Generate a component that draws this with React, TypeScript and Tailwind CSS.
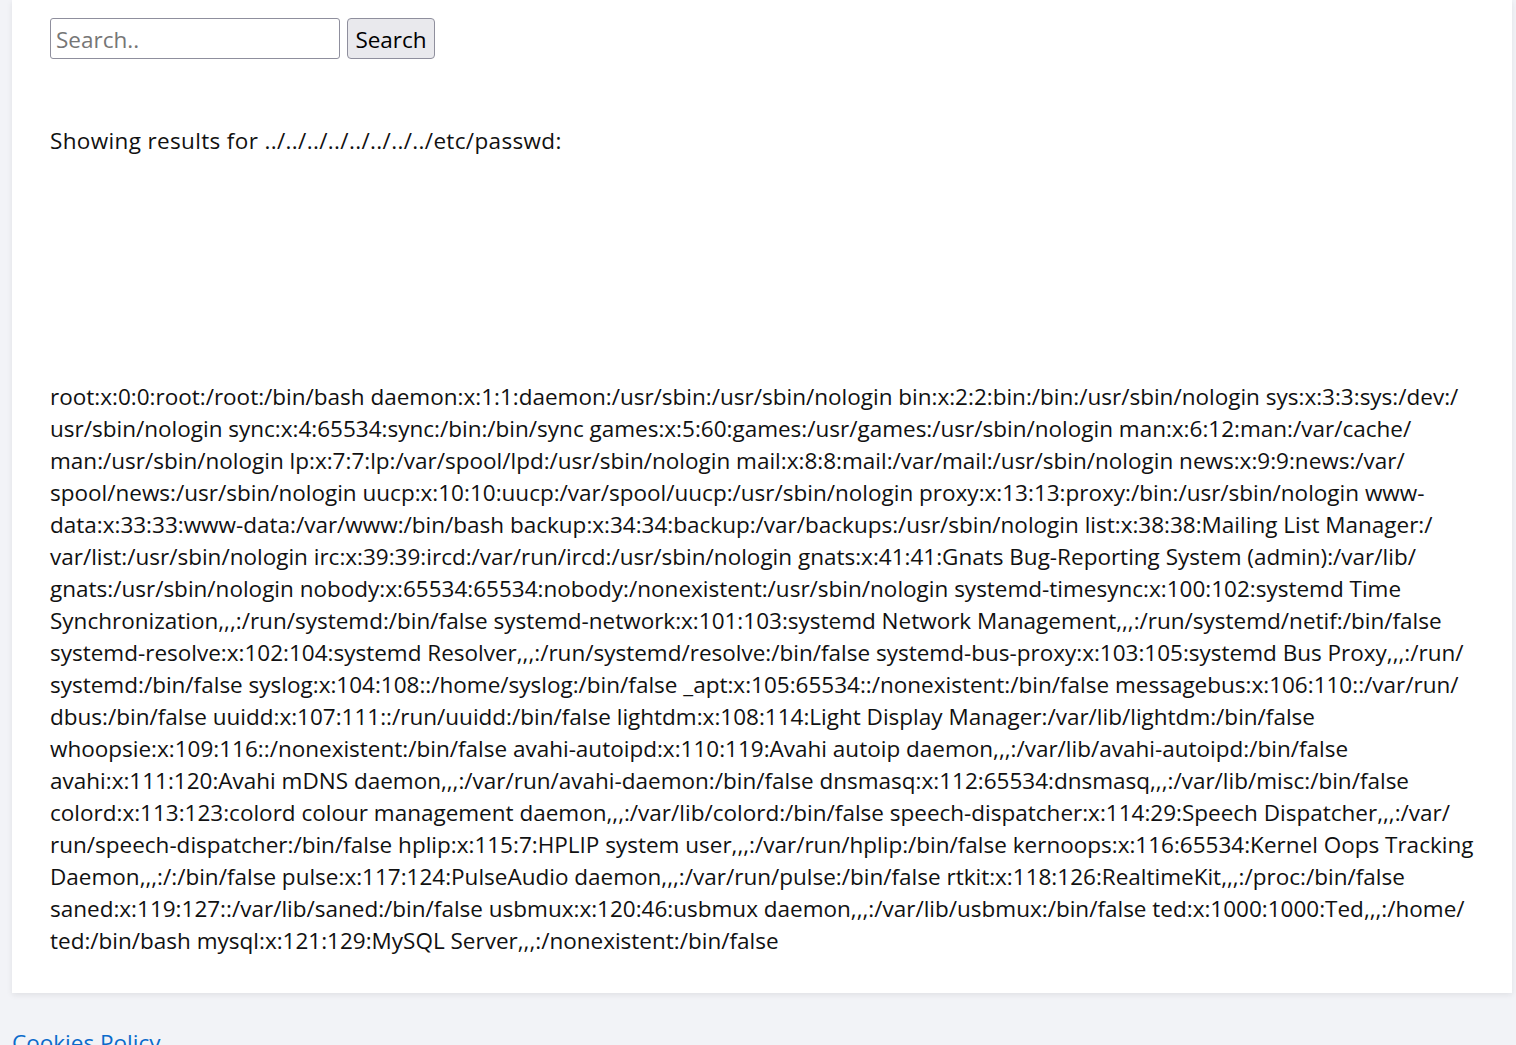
import React from "react";

const lines = [
  "root:x:0:0:root:/root:/bin/bash daemon:x:1:1:daemon:/usr/sbin:/usr/sbin/nologin bin:x:2:2:bin:/bin:/usr/sbin/nologin sys:x:3:3:sys:/dev:/",
  "usr/sbin/nologin sync:x:4:65534:sync:/bin:/bin/sync games:x:5:60:games:/usr/games:/usr/sbin/nologin man:x:6:12:man:/var/cache/",
  "man:/usr/sbin/nologin lp:x:7:7:lp:/var/spool/lpd:/usr/sbin/nologin mail:x:8:8:mail:/var/mail:/usr/sbin/nologin news:x:9:9:news:/var/",
  "spool/news:/usr/sbin/nologin uucp:x:10:10:uucp:/var/spool/uucp:/usr/sbin/nologin proxy:x:13:13:proxy:/bin:/usr/sbin/nologin www-",
  "data:x:33:33:www-data:/var/www:/bin/bash backup:x:34:34:backup:/var/backups:/usr/sbin/nologin list:x:38:38:Mailing List Manager:/",
  "var/list:/usr/sbin/nologin irc:x:39:39:ircd:/var/run/ircd:/usr/sbin/nologin gnats:x:41:41:Gnats Bug-Reporting System (admin):/var/lib/",
  "gnats:/usr/sbin/nologin nobody:x:65534:65534:nobody:/nonexistent:/usr/sbin/nologin systemd-timesync:x:100:102:systemd Time",
  "Synchronization,,,:/run/systemd:/bin/false systemd-network:x:101:103:systemd Network Management,,,:/run/systemd/netif:/bin/false",
  "systemd-resolve:x:102:104:systemd Resolver,,,:/run/systemd/resolve:/bin/false systemd-bus-proxy:x:103:105:systemd Bus Proxy,,,:/run/",
  "systemd:/bin/false syslog:x:104:108::/home/syslog:/bin/false _apt:x:105:65534::/nonexistent:/bin/false messagebus:x:106:110::/var/run/",
  "dbus:/bin/false uuidd:x:107:111::/run/uuidd:/bin/false lightdm:x:108:114:Light Display Manager:/var/lib/lightdm:/bin/false",
  "whoopsie:x:109:116::/nonexistent:/bin/false avahi-autoipd:x:110:119:Avahi autoip daemon,,,:/var/lib/avahi-autoipd:/bin/false",
  "avahi:x:111:120:Avahi mDNS daemon,,,:/var/run/avahi-daemon:/bin/false dnsmasq:x:112:65534:dnsmasq,,,:/var/lib/misc:/bin/false",
  "colord:x:113:123:colord colour management daemon,,,:/var/lib/colord:/bin/false speech-dispatcher:x:114:29:Speech Dispatcher,,,:/var/",
  "run/speech-dispatcher:/bin/false hplip:x:115:7:HPLIP system user,,,:/var/run/hplip:/bin/false kernoops:x:116:65534:Kernel Oops Tracking",
  "Daemon,,,:/:/bin/false pulse:x:117:124:PulseAudio daemon,,,:/var/run/pulse:/bin/false rtkit:x:118:126:RealtimeKit,,,:/proc:/bin/false",
  "saned:x:119:127::/var/lib/saned:/bin/false usbmux:x:120:46:usbmux daemon,,,:/var/lib/usbmux:/bin/false ted:x:1000:1000:Ted,,,:/home/",
  "ted:/bin/bash mysql:x:121:129:MySQL Server,,,:/nonexistent:/bin/false",
];

export default function App() {
  return (
    <div
      className="min-h-[1045px] bg-[#f2f3f7] pl-[12px] pr-[4px] text-[#111] overflow-hidden"
      style={{ fontFamily: '"Open Sans", "Noto Sans", sans-serif' }}
    >
      <div className="bg-white shadow-[0_2px_6px_rgba(0,0,0,0.08)] pl-[38px] pr-[30px] pt-[18px] pb-[36px]">
        <form className="flex items-center gap-[7px]" onSubmit={(e) => e.preventDefault()}>
          <input
            type="text"
            placeholder="Search.."
            className="w-[290px] h-[41px] border border-[#8f8f9d] rounded-[3px] px-[5px] pt-[2px] text-[22.5px] placeholder:text-[#767676] outline-none"
          />
          <button
            type="submit"
            className="h-[41px] w-[88px] bg-[#e9e9ed] border border-[#8f8f9d] rounded-[4px] pt-[3px] text-[22.5px] text-black"
          >
            Search
          </button>
        </form>
        <p className="mt-[66px] text-[22.5px] leading-[32px] tracking-[0.35px]">
          Showing results for ../../../../../../../../etc/passwd:
        </p>
        <div className="mt-[224px] text-[22.5px] leading-[32px]">
          {lines.map((l, i) => (
            <div key={i} className="whitespace-nowrap">
              {l}
            </div>
          ))}
        </div>
      </div>
      <div className="pt-[34px]">
        <a href="#" className="text-[22.5px] leading-[32px] text-[#0b6bcb]">
          Cookies Policy
        </a>
      </div>
    </div>
  );
}
